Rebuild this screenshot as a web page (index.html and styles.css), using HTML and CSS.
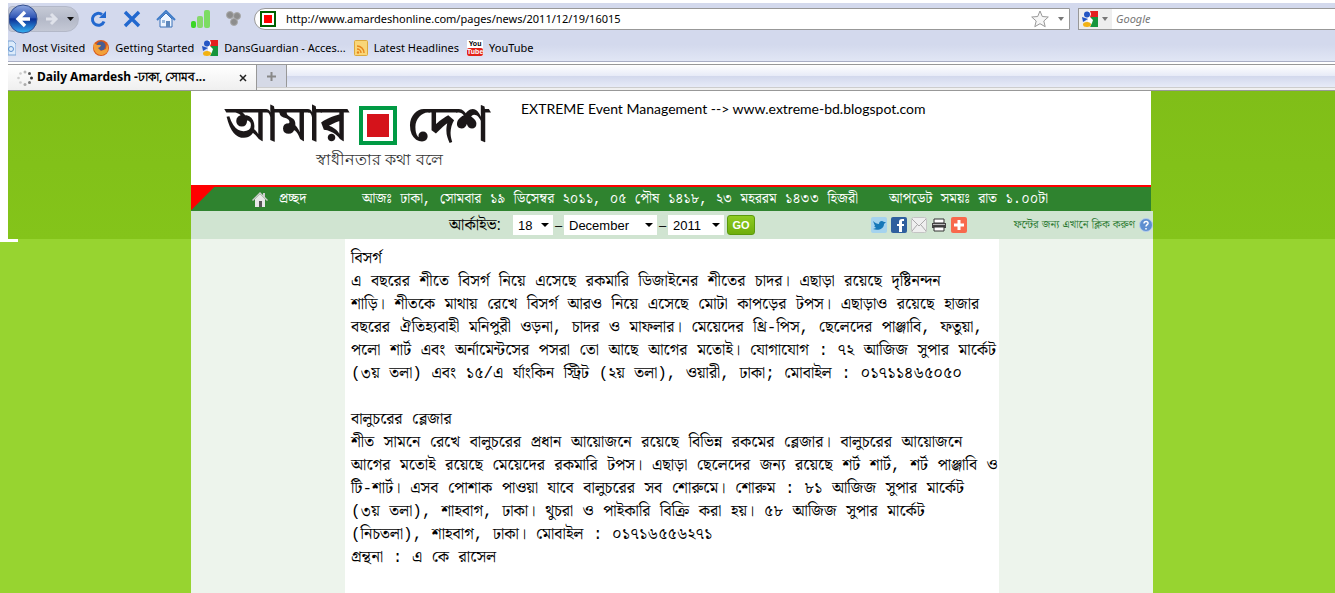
FILE: index.html
```html
<!DOCTYPE html>
<html lang="bn">
<head>
  <meta charset="UTF-8">
  <title>Daily Amardesh</title>
  <link rel="stylesheet" href="styles.css">
</head>
<body>
  <header class="browser">
    <div class="toolbar">
      <div class="history">
        <button class="back" aria-label="Back"><svg width="30" height="30" viewBox="0 0 30 30"><defs><linearGradient id="orb" x2="0" y2="1"><stop offset="0" stop-color="#8fa8e0"/><stop offset=".45" stop-color="#2f55b5"/><stop offset=".5" stop-color="#0c2f96"/><stop offset="1" stop-color="#35b5f5"/></linearGradient></defs><circle cx="14" cy="15" r="14" fill="url(#orb)" stroke="#34508f"/><path d="M16 8l-7 7 7 7M9 15h12" fill="none" stroke="#fff" stroke-width="3.400"/></svg></button>
        <button class="forward" aria-label="Forward"><svg width="16" height="16" viewBox="0 0 16 16"><path d="M6 3l5 5-5 5M1 8h9" fill="none" stroke="#dfe2ea" stroke-width="3"/></svg></button>
        <button class="recent" aria-label="Recent pages"><svg width="7" height="4"><path d="M0 0h7L3.500 4z" fill="#111"/></svg></button>
      </div>
      <button class="tool" aria-label="Reload"><svg width="18" height="18" viewBox="0 0 18 18"><path d="M15 11.500A6 6 0 1 1 13 4.500" fill="none" stroke="#2268cf" stroke-width="3"/><path d="M17 1v7h-7z" fill="#2268cf"/></svg></button>
      <button class="tool" aria-label="Stop"><svg width="18" height="18" viewBox="0 0 18 18"><path d="M2 2l14 14M16 2L2 16" stroke="#2268cf" stroke-width="3.400"/></svg></button>
      <button class="tool" aria-label="Home"><svg width="20" height="18" viewBox="0 0 20 18"><path d="M4 9v8h12V9l-6-6z" fill="#eef5ff" stroke="#3970b8"/><path d="M1 10l9-9 9 9" fill="none" stroke="#3f7cc8" stroke-width="2"/><path d="M10 11h4v6h-4z" fill="#5d87bb"/><path d="M6 10h3v3H6z" fill="#94b6dc"/></svg></button>
      <button class="tool" aria-label="Signal"><svg width="21" height="20" viewBox="0 0 21 20"><rect x="1" y="12" width="5" height="7" rx="2" fill="#3bd625"/><rect x="7" y="7" width="6" height="12" rx="2" fill="#86d96b"/><rect x="14" y="1" width="6" height="18" rx="2" fill="#7ddc62"/></svg></button>
      <button class="tool" aria-label="Add-on"><svg width="18" height="18" viewBox="0 0 18 18"><g fill="#8d8d8d" stroke="#aaa"><circle cx="5" cy="5" r="3.500"/><circle cx="12" cy="6" r="3.500"/><circle cx="9" cy="12" r="3.500"/></g></svg></button>
      <div class="address">
        <svg class="site-icon" width="16" height="16"><path d="M0 0h16v16H0z" fill="#006000"/><path d="M2 2h12v12H2z" fill="#fff"/><path d="M4 4h8v8H4z" fill="#f00"/></svg>
        <input type="text" aria-label="Address" value="http://www.amardeshonline.com/pages/news/2011/12/19/16015">
        <svg width="18" height="18" viewBox="0 0 18 18"><path d="M9 1l2.300 5.500 6 .5-4.500 4 1.400 5.700L9 13.700l-5.200 3L5.200 11 .7 7l6-.5z" fill="#f6f6f6" stroke="#999"/></svg>
        <svg class="drop" width="6" height="4"><path d="M0 0h6L3 4z" fill="#777"/></svg>
      </div>
      <div class="search">
        <div class="engine">
          <svg width="16" height="16" viewBox="0 0 16 16"><path d="M7 0h9v7H7z" fill="#e31f1f"/><path d="M9 6h7v10H8z" fill="#16953c"/><path d="M6 0h2l1 3-1 3 3 3-1 3-2 4H6z" fill="#fff"/><circle cx="5" cy="3.500" r="3" fill="#2456c4"/><path d="M0 6l6 2-5 3z" fill="#2456c4"/><ellipse cx="5" cy="13.500" rx="4" ry="2.500" fill="#f2b213"/></svg>
          <svg width="6" height="4"><path d="M0 0h6L3 4z" fill="#777"/></svg>
        </div>
        <input type="text" aria-label="Search" placeholder="Google">
      </div>
    </div>
    <nav class="bookmarks">
      <a href="#"><svg width="8" height="16"><path d="M0 1h5l3 3v11H0z" fill="#dcebfb" stroke="#7ba3d4"/><circle cx="3" cy="9" r="2.500" fill="none" stroke="#5c90cf"/></svg>Most Visited</a>
      <a href="#"><svg width="16" height="16" viewBox="0 0 16 16"><circle cx="8" cy="8" r="8" fill="#d9581a"/><circle cx="8" cy="6" r="4.500" fill="#4a5f92"/><path d="M1 3l3 2 4 0-1 2-2 1 3 3 5-2 1-5c3 7-1 11-6 11S-1 9 1 3z" fill="#f2a03a"/></svg>Getting Started</a>
      <a href="#"><svg width="16" height="16" viewBox="0 0 16 16"><path d="M7 0h9v7H7z" fill="#e31f1f"/><path d="M9 6h7v10H8z" fill="#16953c"/><path d="M6 0h2l1 3-1 3 3 3-1 3-2 4H6z" fill="#fff"/><circle cx="5" cy="3.500" r="3" fill="#2456c4"/><path d="M0 6l6 2-5 3z" fill="#2456c4"/><ellipse cx="5" cy="13.500" rx="4" ry="2.500" fill="#f2b213"/></svg>DansGuardian - Acces...</a>
      <a href="#"><svg width="14" height="16" viewBox="0 0 14 16"><rect x=".5" y=".5" width="13" height="15" rx="1" fill="#f9d678" stroke="#dca93c"/><path d="M3 9a4 4 0 0 1 4 4M3 6a7 7 0 0 1 7 7" fill="none" stroke="#e8861c" stroke-width="1.500"/><circle cx="4" cy="12.500" r="1.200" fill="#e8861c"/></svg>Latest Headlines</a>
      <a href="#"><span class="yt"><span>You</span><span class="tube">Tube</span></span>YouTube</a>
    </nav>
    <div class="tabs">
      <div class="tab">
        <svg width="16" height="16" viewBox="0 0 16 16"><g fill="#777"><circle cx="8" cy="2" r="1.500" fill="#bbb"/><circle cx="12.500" cy="3.500" r="1.500" fill="#555"/><circle cx="14.500" cy="8" r="1.500" fill="#333"/><circle cx="12.500" cy="12.500" r="1.500"/><circle cx="8" cy="14.500" r="1.500" fill="#aaa"/><circle cx="3.500" cy="12.500" r="1.300" fill="#ccc"/><circle cx="1.500" cy="8" r="1.300" fill="#ccc"/><circle cx="3.500" cy="3.500" r="1.300" fill="#ccc"/></g></svg>
        <span class="tab-title">Daily Amardesh -ঢাকা, সোমব...</span>
        <button class="tab-close" aria-label="Close tab"><svg width="8" height="8"><path d="M1 1l6 6M7 1L1 7" stroke="#222" stroke-width="1.500"/></svg></button>
      </div>
      <button class="new-tab" aria-label="New tab"><svg width="9" height="9"><path d="M4.500 0v9M0 4.500h9" stroke="#888" stroke-width="2"/></svg></button>
    </div>
  </header>

  <div class="top-band">
    <div class="site-head">
      <div class="masthead">
        <div class="logo">
          <div class="logo-name"><span>আমার</span><svg width="38" height="39"><path d="M0 0h38v39H0z" fill="#009a44"/><path d="M4 4h30v31H4z" fill="#fff"/><path d="M8 8h22v23H8z" fill="#d5131b"/></svg><span>দেশ</span></div>
          <div class="slogan">স্বাধীনতার কথা বলে</div>
        </div>
        <p class="sponsor">EXTREME Event Management --&gt; www.extreme-bd.blogspot.com</p>
      </div>
      <div class="nav-bar">
        <a class="home" href="#"><svg width="16" height="15" viewBox="0 0 16 15"><path d="M3 7v8h10V7L8 2z" fill="#e8e8e8"/><path d="M0 8l8-8 3 3V1h2v4l3 3-1 1-7-7-7 7z" fill="#ccc"/><path d="M7 9h3v6H7z" fill="#555"/></svg>প্রচ্ছদ</a>
        <span class="today">আজঃ ঢাকা, সোমবার ১৯ ডিসেম্বর ২০১১, ০৫ পৌষ ১৪১৮, ২৩ মহররম ১৪৩৩ হিজরী</span>
        <span>আপডেট সময়ঃ রাত ১.০০টা</span>
      </div>
      <div class="archive-bar">
        <form class="archive">
          <label for="day">আর্কাইভ:</label>
          <span class="pick day"><select id="day"><option>18</option></select></span>
          <span class="dash">–</span>
          <span class="pick month"><select aria-label="Month"><option>December</option></select></span>
          <span class="dash">–</span>
          <span class="pick year"><select aria-label="Year"><option>2011</option></select></span>
          <button class="go" type="button">GO</button>
        </form>
        <div class="share">
          <a href="#" aria-label="Twitter"><svg width="16" height="16"><rect width="16" height="16" rx="2" fill="#a5d3ee"/><path d="M2 4c2 2 4 3 6 3 0-3 3-4 5-2l2 0-2 2c0 5-6 7-11 5l3-1-2-2 1 0z" fill="#1678b8"/></svg></a>
          <a href="#" aria-label="Facebook"><svg width="16" height="16"><rect width="16" height="16" rx="2" fill="#2f5f9e"/><path d="M8 15V9H6V7h2V5c0-2 1-3 3-3h2v2h-1c-1 0-1 0-1 1v2h2v2h-2v6z" fill="#fff"/></svg></a>
          <a href="#" aria-label="Email"><svg width="16" height="16"><rect x=".5" y=".5" width="15" height="15" rx="2" fill="#efefef" stroke="#c4c4c4"/><path d="M1 2l7 7 7-7M1 14l5-6M15 14l-5-6" fill="none" stroke="#aaa"/></svg></a>
          <a href="#" aria-label="Print"><svg width="16" height="16"><path d="M3 2h10v4H3z" fill="#fff" stroke="#333"/><path d="M1 6h14v5H1z" fill="#444"/><path d="M2 7h12v1H2z" fill="#bbb"/><path d="M3 10h10v4H3z" fill="#fff" stroke="#333"/></svg></a>
          <a href="#" aria-label="More"><svg width="16" height="16"><rect width="16" height="16" rx="2" fill="#f8694d"/><path d="M8 3v10M3 8h10" stroke="#fff" stroke-width="3"/></svg></a>
        </div>
        <a class="font-help" href="#">ফন্টের জন্য এখানে ক্লিক করুণ<svg width="14" height="14" viewBox="0 0 14 14"><circle cx="7" cy="7" r="6.500" fill="#5d8fd0" stroke="#b6cdec"/><path d="M5 5.500c0-3 4.500-2.500 4 0C8.700 6.700 7 6.700 7 8.500M7 10v1.500" fill="none" stroke="#fff" stroke-width="1.500"/></svg></a>
      </div>
    </div>
  </div>

  <div class="page-body">
    <div class="columns">
      <main class="article">
        <p>বিসর্গ<br>
        এ বছরের শীতে বিসর্গ নিয়ে এসেছে রকমারি ডিজাইনের শীতের চাদর। এছাড়া রয়েছে দৃষ্টিনন্দন<br>
        শাড়ি। শীতকে মাথায় রেখে বিসর্গ আরও নিয়ে এসেছে মোটা কাপড়ের টপস। এছাড়াও রয়েছে হাজার<br>
        বছরের ঐতিহ্যবাহী মনিপুরী ওড়না, চাদর ও মাফলার। মেয়েদের থ্রি-পিস, ছেলেদের পাঞ্জাবি, ফতুয়া,<br>
        পলো শার্ট এবং অর্নামেন্টসের পসরা তো আছে আগের মতোই। যোগাযোগ : ৭২ আজিজ সুপার মার্কেট<br>
        (৩য় তলা) এবং ১৫/এ র্যাংকিন স্ট্রিট (২য় তলা), ওয়ারী, ঢাকা; মোবাইল : ০১৭১১৪৬৫০৫০</p>
        <p>বালুচরের ব্লেজার<br>
        শীত সামনে রেখে বালুচরের প্রধান আয়োজনে রয়েছে বিভিন্ন রকমের ব্লেজার। বালুচরের আয়োজনে<br>
        আগের মতোই রয়েছে মেয়েদের রকমারি টপস। এছাড়া ছেলেদের জন্য রয়েছে শর্ট শার্ট, শর্ট পাঞ্জাবি ও<br>
        টি-শার্ট। এসব পোশাক পাওয়া যাবে বালুচরের সব শোরুমে। শোরুম : ৮১ আজিজ সুপার মার্কেট<br>
        (৩য় তলা), শাহবাগ, ঢাকা। থুচরা ও পাইকারি বিক্রি করা হয়। ৫৮ আজিজ সুপার মার্কেট<br>
        (নিচতলা), শাহবাগ, ঢাকা। মোবাইল : ০১৭১৬৫৫৬২৭১<br>
        গ্রন্থনা : এ কে রাসেল</p>
      </main>
    </div>
  </div>
</body>
</html>
```

FILE: styles.css
```css
* {
  box-sizing: border-box;
}

body {
  margin: 0;
  min-height: 100vh;
  display: flex;
  flex-direction: column;
  background: #fff;
  font-family: "Liberation Mono", "Noto Serif Bengali", monospace;
  font-size: 16px;
  color: #000;
}

a {
  color: inherit;
  text-decoration: none;
}

svg {
  flex: none;
}

button {
  padding: 0;
  border: none;
  background: none;
}

/* browser window */
.browser {
  margin: 3px 0 0 8px;
  font-family: "Noto Sans", sans-serif;
  font-size: 11px;
}

.toolbar {
  display: flex;
  align-items: center;
  height: 31px;
  background: #d3d9ed;
}

.history {
  display: flex;
  align-items: center;
  width: 71px;
  height: 26px;
  margin-right: 2px;
  border: 1px solid #b3b8c8;
  border-radius: 4px 13px 13px 4px;
  background: linear-gradient(#c6cad6, #b4b9c8 50%, #c4c8d5);
}

.history svg {
  display: block;
}

.forward {
  margin: 0 6px;
}

.tool {
  display: flex;
  justify-content: center;
  width: 34px;
}

.address {
  flex: 1;
  display: flex;
  align-items: center;
  height: 22px;
  margin-left: 3px;
  padding: 0 5px;
  border: 1px solid #989898;
  border-radius: 11px 0 0 11px;
  background: #fff;
}

.address input,
.search input {
  flex: 1;
  min-width: 0;
  padding: 0;
  border: none;
  background: none;
  font: inherit;
  color: #000;
}

.address input {
  margin-left: 10px;
}

.drop {
  margin-left: 9px;
}

.search {
  display: flex;
  align-items: center;
  width: 257px;
  height: 22px;
  margin-left: 8px;
  border: 1px solid #989898;
  border-right: none;
  background: #fff;
}

.engine {
  display: flex;
  align-items: center;
  gap: 4px;
  width: 33px;
  height: 20px;
  margin-right: 4px;
  padding-left: 3px;
  background: #eee;
}

.search input::placeholder {
  color: #777;
  font-style: italic;
}

.bookmarks {
  display: flex;
  gap: 8px;
  height: 28px;
  border-bottom: 1px solid #a9aec4;
  background: linear-gradient(#d3d9ed 40%, #e1e6f5);
}

.bookmarks a {
  display: flex;
  align-items: center;
  gap: 6px;
  white-space: nowrap;
}

.yt {
  width: 16px;
  background: #fff;
  font: bold 7px/8px "Liberation Sans", sans-serif;
  text-align: center;
}

.yt span {
  display: block;
}

.yt .tube {
  border-radius: 2px;
  background: #e2231a;
  color: #fff;
}

.tabs {
  display: flex;
  height: 27px;
  margin-top: 2px;
  border-top: 1px solid #989898;
  border-bottom: 1px solid #989898;
  background: linear-gradient(#fff, #e6eaf7 45%, #d3d9ed 46%, #e6eaf7 86%, #989898 87%, #f0f0f0 92%);
}

.tab {
  display: flex;
  align-items: center;
  width: 249px;
  padding: 0 9px;
  border-right: 1px solid #989898;
  background: linear-gradient(#fff, #efefef);
}

.tab-title {
  flex: 1;
  margin-left: 4px;
  font-size: 12px;
  font-weight: bold;
  white-space: nowrap;
}

.new-tab {
  width: 30px;
  height: 22px;
  border-right: 1px solid #989898;
  background: #d5d9e6;
}

/* site header */
.top-band {
  margin-left: 8px;
  padding-right: 1px;
  background: linear-gradient(#80be18, #84c41a);
}

.site-head {
  max-width: 960px;
  margin: 0 auto;
}

.masthead {
  display: flex;
  height: 94px;
  padding-left: 35px;
  background: #fff;
}

.logo {
  width: 295px;
}

.logo-name {
  display: flex;
  align-items: center;
  gap: 11px;
  padding-top: 7px;
  color: #1b1718;
  font-family: "Noto Serif Bengali", "Liberation Serif", serif;
  font-size: 50px;
  font-weight: bold;
  line-height: 54px;
}

.slogan {
  padding-left: 90px;
  color: #333;
  font-family: "Liberation Sans", sans-serif;
  font-size: 16px;
  line-height: 16px;
}

.sponsor {
  margin: 8px 0 0;
  font-family: Lato, sans-serif;
  font-size: 14px;
  line-height: 20px;
}

.nav-bar {
  display: flex;
  align-items: center;
  height: 26px;
  border-top: 2px solid #f00;
  background: linear-gradient(135deg, #f00 16px, #2f832f 17px);
  color: #fff;
  font-size: 14px;
  white-space: nowrap;
}

.home {
  display: flex;
  align-items: center;
  gap: 11px;
  width: 110px;
  margin-left: 61px;
}

.today {
  width: 527px;
}

.archive-bar {
  display: flex;
  align-items: center;
  height: 28px;
  margin-right: -2px;
  padding-left: 258px;
  background: #d0e4d1;
}

.archive {
  display: flex;
  align-items: center;
  width: 422px;
  font-family: "Liberation Sans", "Noto Serif Bengali", sans-serif;
  white-space: nowrap;
}

.archive label {
  width: 64px;
}

.dash {
  width: 11px;
  font-size: 13px;
  text-align: center;
}

.pick {
  position: relative;
  height: 20px;
}

.pick::after {
  content: "";
  position: absolute;
  top: 8px;
  right: 4px;
  border: 4px solid transparent;
  border-top-color: #000;
  border-bottom: none;
  pointer-events: none;
}

.pick select {
  appearance: none;
  width: 100%;
  height: 20px;
  padding: 0 5px;
  border: none;
  border-radius: 0;
  background: #fff;
  color: #000;
  font: 13px "Liberation Sans", sans-serif;
}

.day {
  width: 40px;
}

.month {
  width: 93px;
}

.year {
  width: 56px;
}

.go {
  width: 28px;
  height: 20px;
  margin-left: 3px;
  border: 1px solid #5a9a0c;
  border-radius: 3px;
  background: linear-gradient(#8ecb22, #6fae0c);
  color: #fff;
  font: bold 11px "Liberation Sans", sans-serif;
}

.share {
  display: flex;
  gap: 4px;
}

.share svg,
.font-help svg {
  display: block;
}

.font-help {
  display: flex;
  align-items: center;
  gap: 4px;
  margin-left: auto;
  color: #2c7a32;
  font-family: "Liberation Sans", "Noto Serif Bengali", sans-serif;
  font-size: 11px;
  white-space: nowrap;
}

/* article */
.page-body {
  position: relative;
  flex: 1;
  display: flex;
  justify-content: center;
  padding-left: 9px;
  background: #97d430;
}

.page-body::before {
  content: "";
  position: absolute;
  top: 0;
  left: 0;
  width: 18px;
  height: 3px;
  background: #fff;
}

.columns {
  display: flex;
  justify-content: center;
  width: 100%;
  max-width: 962px;
  background: #edf4ec;
}

.article {
  width: 100%;
  max-width: 654px;
  padding: 9px 6px;
  background: #fff;
  line-height: 23px;
  white-space: nowrap;
}

.article p {
  margin: 0 0 23px;
}
```
